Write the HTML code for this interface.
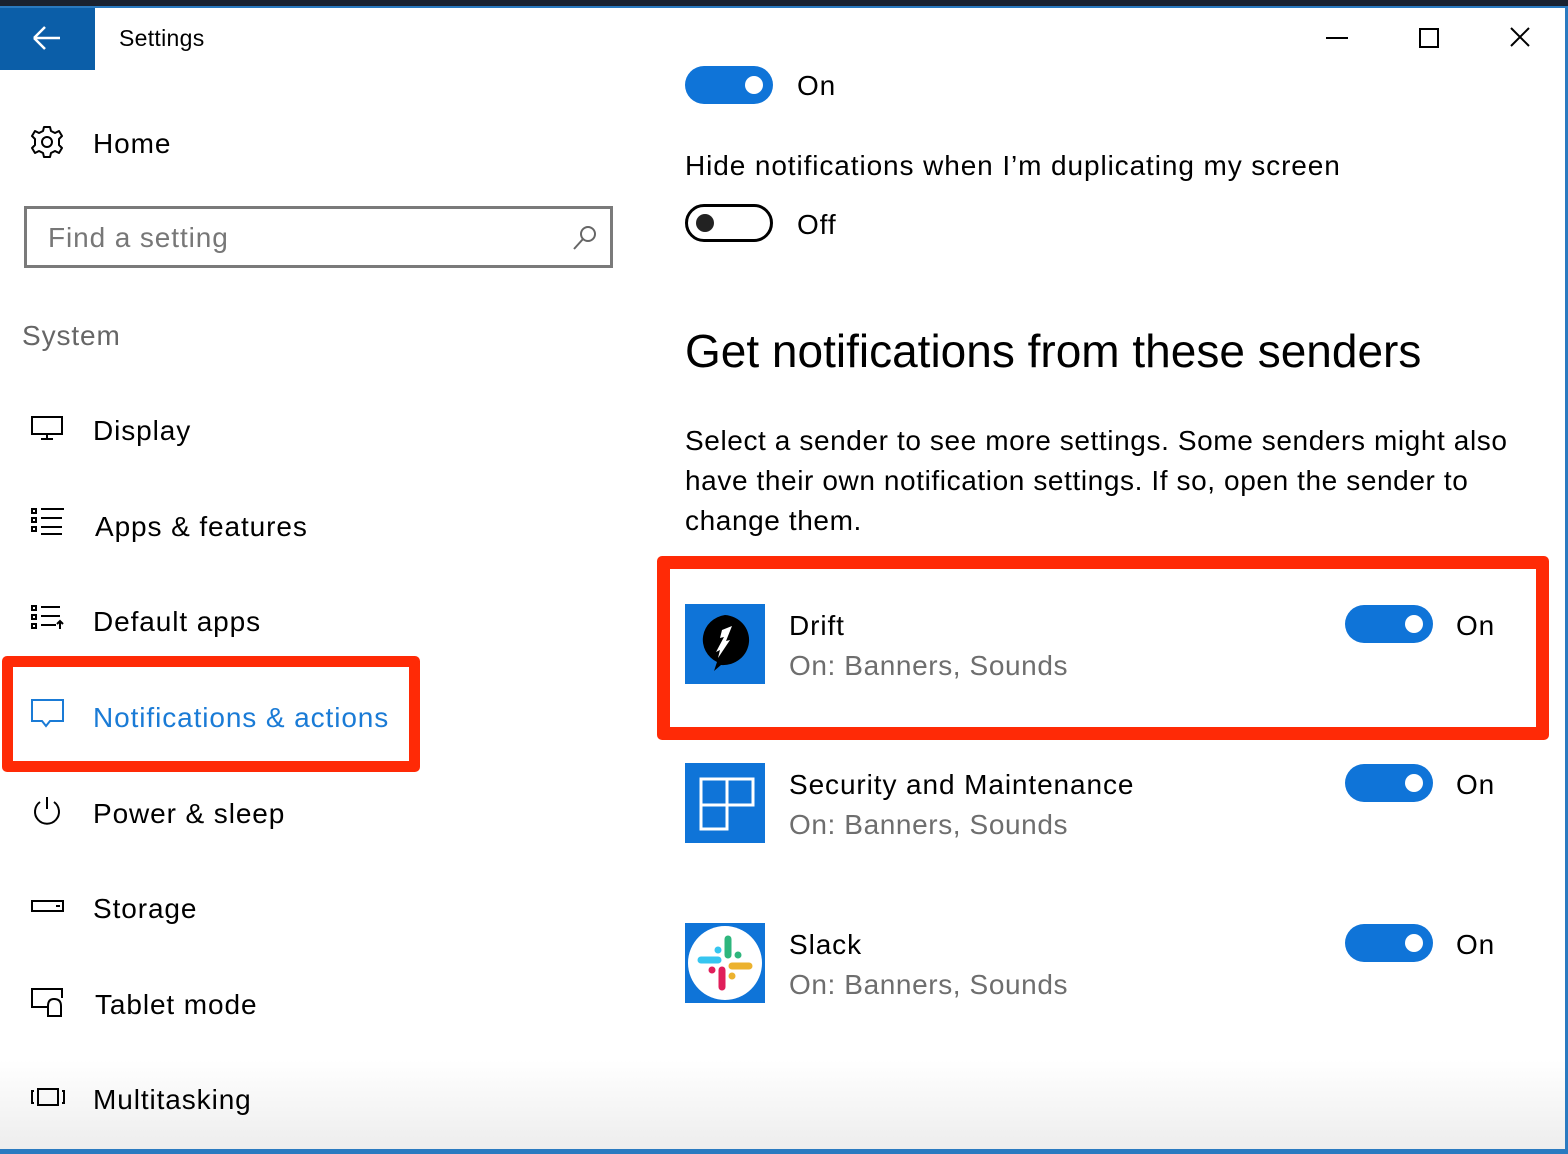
<!DOCTYPE html>
<html><head><meta charset="utf-8"><style>
*{margin:0;padding:0;box-sizing:border-box}
body{width:1568px;height:1154px;position:relative;overflow:hidden;background:#fff;font-family:"Liberation Sans",sans-serif;color:#000}
.a{position:absolute;white-space:nowrap}
.t{font-size:28px;letter-spacing:0.9px}
.g{color:#6e6e6e;letter-spacing:0.6px}
.tog{position:absolute;width:88px;height:38px;border-radius:19px;background:#0f74d8}
.tog::after{content:"";position:absolute;right:10px;top:10px;width:18px;height:18px;border-radius:50%;background:#fff}
.off{background:#fff;border:3px solid #000}
.off::after{left:8px;right:auto;top:7px;background:#222}
</style></head><body>
<div class="a" style="left:0;top:0;width:1568px;height:6px;background:#1a2230"></div>
<div class="a" style="left:0;top:6px;width:1568px;height:2px;background:#2a7ac0"></div>
<div class="a" style="left:1565px;top:6px;width:3px;height:1148px;background:#2a7ac0"></div>
<div class="a" style="left:0;top:1060px;width:1565px;height:89px;background:linear-gradient(#fff,#ededed)"></div>
<div class="a" style="left:0;top:1149px;width:1568px;height:5px;background:#2a7ac0"></div>

<div class="a" style="left:0;top:8px;width:95px;height:62px;background:#0b5ea8"></div>
<svg class="a" style="left:30px;top:24px" width="32" height="28"><path d="M4 14H30M4 14L15 3M4 14L15 25" stroke="#fff" stroke-width="2.5" fill="none"/></svg>
<div class="a" style="left:119px;top:25px;font-size:23px;letter-spacing:0.3px">Settings</div>
<svg class="a" style="left:1320px;top:20px" width="220" height="40"><path d="M6 18H28" stroke="#000" stroke-width="2"/><rect x="100" y="9" width="18" height="18" fill="none" stroke="#000" stroke-width="2"/><path d="M191 8L209 26M209 8L191 26" stroke="#000" stroke-width="2"/></svg>

<svg class="a" style="left:30px;top:125px" width="34" height="34" viewBox="0 0 34 34"><circle cx="17" cy="17" r="5" fill="none" stroke="#000" stroke-width="2"/><path d="M14 2H20L21 6L25 8L29 6L32 11L29 14V20L32 23L29 28L25 26L21 28L20 32H14L13 28L9 26L5 28L2 23L5 20V14L2 11L5 6L9 8L13 6Z" fill="none" stroke="#000" stroke-width="2" stroke-linejoin="round"/></svg>
<div class="a t" style="left:93px;top:128px">Home</div>
<div class="a" style="left:24px;top:206px;width:589px;height:62px;border:3px solid #7a7a7a"></div>
<div class="a t" style="left:48px;top:222px;color:#777">Find a setting</div>
<svg class="a" style="left:570px;top:222px" width="30" height="30"><circle cx="18" cy="12" r="7" fill="none" stroke="#666" stroke-width="2"/><path d="M13 17L4 27" stroke="#666" stroke-width="2"/></svg>
<div class="a t" style="left:22px;top:320px;color:#666">System</div>

<svg class="a" style="left:30px;top:414px" width="36" height="30"><rect x="2" y="3" width="30" height="17" fill="none" stroke="#000" stroke-width="2"/><path d="M17 20V25M11 25H23" stroke="#000" stroke-width="2"/></svg>
<div class="a t" style="left:93px;top:415px">Display</div>
<svg class="a" style="left:30px;top:506px" width="36" height="34"><g fill="none" stroke="#000" stroke-width="2"><rect x="2" y="3" width="4" height="4"/><rect x="2" y="12" width="4" height="4"/><rect x="2" y="21" width="4" height="4"/><path d="M11 3H34M11 12H32M11 21H32M11 28H32"/></g></svg>
<div class="a t" style="left:95px;top:511px">Apps &amp; features</div>
<svg class="a" style="left:30px;top:604px" width="36" height="30"><g fill="none" stroke="#000" stroke-width="2"><rect x="2" y="2" width="4" height="4"/><rect x="2" y="11" width="4" height="4"/><rect x="2" y="20" width="4" height="4"/><path d="M11 3H30M11 12H30M11 21H26M30 25V17M27 20L30 17L33 20"/></g></svg>
<div class="a t" style="left:93px;top:606px">Default apps</div>
<svg class="a" style="left:30px;top:697px" width="36" height="36"><path d="M2 3H33V24H20L16 29L12 24H2Z" fill="none" stroke="#1a7bd6" stroke-width="2"/></svg>
<div class="a t" style="left:93px;top:702px;color:#1a7bd6">Notifications &amp; actions</div>
<div class="a" style="left:2px;top:656px;width:418px;height:116px;border:11px solid #ff2a06;border-radius:5px"></div>
<svg class="a" style="left:30px;top:795px" width="36" height="34"><path d="M17 2V14M10 7A12 12 0 1 0 24 7" fill="none" stroke="#000" stroke-width="2"/></svg>
<div class="a t" style="left:93px;top:798px">Power &amp; sleep</div>
<svg class="a" style="left:30px;top:898px" width="36" height="20"><rect x="2" y="3" width="31" height="10" fill="none" stroke="#000" stroke-width="2"/><path d="M26 8H30" stroke="#000" stroke-width="2"/></svg>
<div class="a t" style="left:93px;top:893px">Storage</div>
<svg class="a" style="left:30px;top:986px" width="36" height="34"><path d="M22 21H2V3H32V12" fill="none" stroke="#000" stroke-width="2"/><path d="M18 30V20Q18 13 24 13Q31 13 31 20V30Z" fill="#fff" stroke="#000" stroke-width="2"/></svg>
<div class="a t" style="left:95px;top:989px">Tablet mode</div>
<svg class="a" style="left:30px;top:1086px" width="36" height="24"><rect x="8" y="3" width="20" height="16" fill="none" stroke="#000" stroke-width="2"/><path d="M4 5H2V17H4M32 5H34V17H32" fill="none" stroke="#000" stroke-width="2"/></svg>
<div class="a t" style="left:93px;top:1084px">Multitasking</div>

<div class="tog" style="left:685px;top:66px"></div>
<div class="a t" style="left:797px;top:70px">On</div>
<div class="a t" style="left:685px;top:150px">Hide notifications when I’m duplicating my screen</div>
<div class="tog off" style="left:685px;top:204px"></div>
<div class="a t" style="left:797px;top:209px">Off</div>
<div class="a" style="left:685px;top:324px;font-size:46px">Get notifications from these senders</div>
<div class="a t" style="left:685px;top:421px;line-height:40px;white-space:normal;width:840px;letter-spacing:0.6px">Select a sender to see more settings. Some senders might also have their own notification settings. If so, open the sender to change them.</div>

<div class="a" style="left:657px;top:556px;width:892px;height:184px;border:13px solid #ff2a06;border-radius:5px"></div>
<div class="a" style="left:685px;top:604px;width:80px;height:80px;background:#0f74d8"></div>
<svg class="a" style="left:685px;top:604px" width="80" height="80"><path d="M40 11A26 25 0 1 1 36 61L29 67L32 58A26 25 0 0 1 40 11Z" fill="#000"/><path d="M47 22L37 26L35 34L39 33L31 48L35 46L33 54L45 36L41 37L47 22Z" fill="#fff"/></svg>
<div class="a t" style="left:789px;top:610px">Drift</div>
<div class="a t g" style="left:789px;top:650px">On: Banners, Sounds</div>
<div class="tog" style="left:1345px;top:605px"></div>
<div class="a t" style="left:1456px;top:610px">On</div>

<div class="a" style="left:685px;top:763px;width:80px;height:80px;background:#0f74d8"></div>
<svg class="a" style="left:685px;top:763px" width="80" height="80"><g fill="none" stroke="#fff" stroke-width="3"><rect x="16" y="16" width="52" height="26"/><rect x="16" y="16" width="26" height="50"/><path d="M16 42H42"/></g></svg>
<div class="a t" style="left:789px;top:769px">Security and Maintenance</div>
<div class="a t g" style="left:789px;top:809px">On: Banners, Sounds</div>
<div class="tog" style="left:1345px;top:764px"></div>
<div class="a t" style="left:1456px;top:769px">On</div>

<div class="a" style="left:685px;top:923px;width:80px;height:80px;background:#0f74d8"></div>
<svg class="a" style="left:685px;top:923px" width="80" height="80"><circle cx="40" cy="40" r="37" fill="#fff"/><g stroke-linecap="round" stroke-width="7"><path d="M33 37H16" stroke="#36c5f0"/><path d="M33 27V27" stroke="#36c5f0"/><path d="M43 32V16" stroke="#2eb67d"/><path d="M53 32V32" stroke="#2eb67d"/><path d="M47 43H64" stroke="#ecb22e"/><path d="M47 53V53" stroke="#ecb22e"/><path d="M37 47V64" stroke="#e01e5a"/><path d="M27 47V47" stroke="#e01e5a"/></g></svg>
<div class="a t" style="left:789px;top:929px">Slack</div>
<div class="a t g" style="left:789px;top:969px">On: Banners, Sounds</div>
<div class="tog" style="left:1345px;top:924px"></div>
<div class="a t" style="left:1456px;top:929px">On</div>
</body></html>
